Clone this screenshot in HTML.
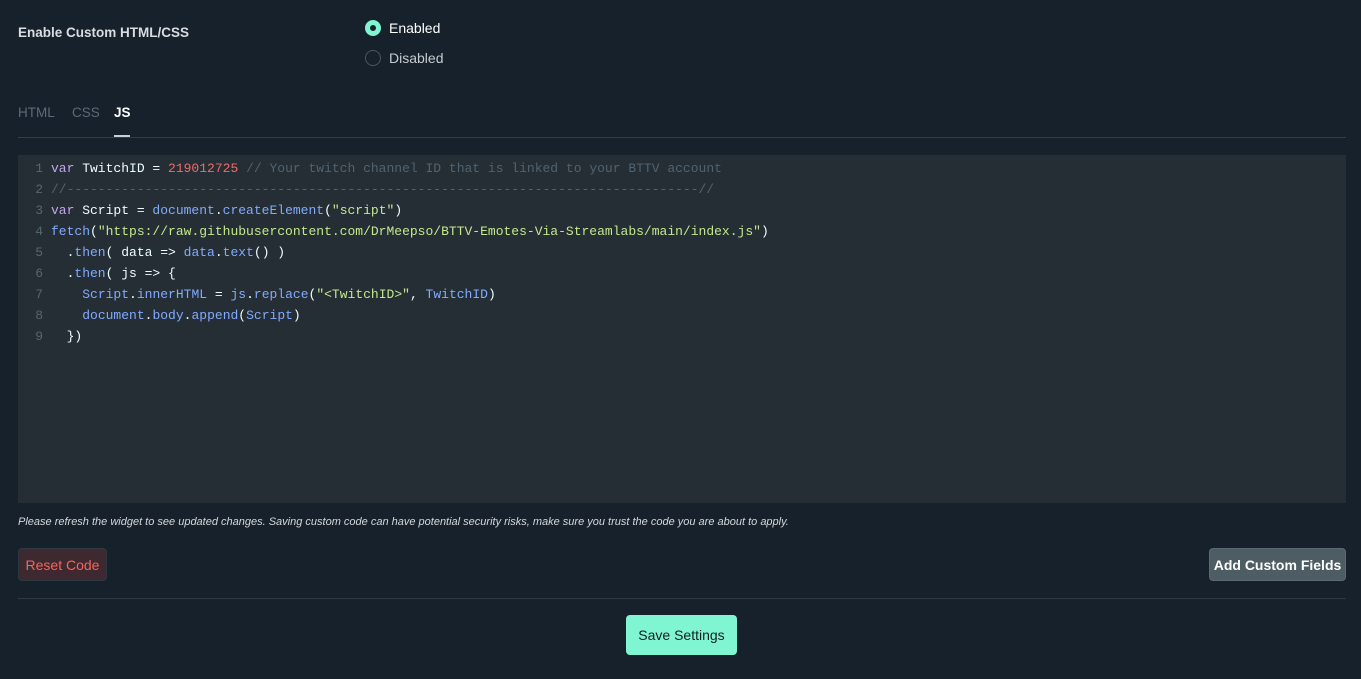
<!DOCTYPE html>
<html><head><meta charset="utf-8"><style>
*{margin:0;padding:0;box-sizing:border-box}
body{width:1361px;height:679px;background:#17212b;font-family:"Liberation Sans",sans-serif;position:relative;overflow:hidden;color:#dfe3e6}
.abs{position:absolute}
.lbl{left:18px;top:25px;font-size:13.5px;font-weight:bold;color:#d9dde0}
.radio{left:365px;width:16px;height:16px;border-radius:50%}
.rt{left:389px;font-size:14px}
.tab{top:105px;font-size:13.5px;color:#5b6b77}
.editor{left:18px;top:155px;width:1328px;height:348px;background:#252e34;font-family:"Liberation Mono",monospace;font-size:13px;line-height:21px;padding-top:3px;white-space:pre;color:#eeffff}
.ln{display:inline-block;width:25px;text-align:right;color:#56666f;margin-right:8px}
.k{color:#c3a6f0}.n{color:#f26a6a}.c{color:#4f6370}.f{color:#82aaff}.s{color:#c3e88d}.p{color:#89ddff}
.btn{border-radius:4px;font-size:14px;display:flex;align-items:center;justify-content:center}
</style></head><body>
<div class="abs lbl">Enable Custom HTML/CSS</div>
<div class="abs radio" style="top:20px;background:#80f5d2;"><div style="position:absolute;left:5px;top:5px;width:6px;height:6px;border-radius:50%;background:#17212b"></div></div>
<div class="abs rt" style="top:20px;color:#fff">Enabled</div>
<div class="abs radio" style="top:50px;border:1px solid #4a5660"></div>
<div class="abs rt" style="top:50px;color:#c5ccd1">Disabled</div>
<div class="abs tab" style="left:18px">HTML</div>
<div class="abs tab" style="left:72px">CSS</div>
<div class="abs tab" style="left:114px;color:#fff;font-weight:bold">JS</div>
<div class="abs" style="left:114px;top:135px;width:16px;height:2px;background:#c9d0d5"></div>
<div class="abs" style="left:18px;top:137px;width:1328px;height:1px;background:#313d47"></div>
<div class="abs editor"><span class="ln">1</span><span class="k">var</span> TwitchID = <span class="n">219012725</span> <span class="c">// Your twitch channel ID that is linked to your BTTV account</span>
<span class="ln">2</span><span class="c">//---------------------------------------------------------------------------------//</span>
<span class="ln">3</span><span class="k">var</span> Script = <span class="f">document</span>.<span class="f">createElement</span>(<span class="s">"script"</span>)
<span class="ln">4</span><span class="f">fetch</span>(<span class="s">"https://raw.githubusercontent.com/DrMeepso/BTTV-Emotes-Via-Streamlabs/main/index.js"</span>)
<span class="ln">5</span>  .<span class="f">then</span>( data =&gt; <span class="f">data</span>.<span class="f">text</span>() )
<span class="ln">6</span>  .<span class="f">then</span>( js =&gt; {
<span class="ln">7</span>    <span class="f">Script</span>.<span class="f">innerHTML</span> = <span class="f">js</span>.<span class="f">replace</span>(<span class="s">"&lt;TwitchID&gt;"</span>, <span class="f">TwitchID</span>)
<span class="ln">8</span>    <span class="f">document</span>.<span class="f">body</span>.<span class="f">append</span>(<span class="f">Script</span>)
<span class="ln">9</span>  })</div>
<div class="abs" style="left:18px;top:516px;font-size:11px;font-style:italic;color:#d3d8dc">Please refresh the widget to see updated changes. Saving custom code can have potential security risks, make sure you trust the code you are about to apply.</div>
<div class="abs btn" style="left:18px;top:548px;width:89px;height:33px;background:#3e2930;border:1px solid #2e3840;color:#f5655a">Reset Code</div>
<div class="abs btn" style="left:1209px;top:548px;width:137px;height:33px;background:#4e5d64;border:1px solid #5a6a72;color:#fff;font-weight:bold">Add Custom Fields</div>
<div class="abs" style="left:18px;top:598px;width:1328px;height:1px;background:#2e3a44"></div>
<div class="abs btn" style="left:626px;top:615px;width:111px;height:40px;background:#80f5d2;color:#12201c">Save Settings</div>
</body></html>
